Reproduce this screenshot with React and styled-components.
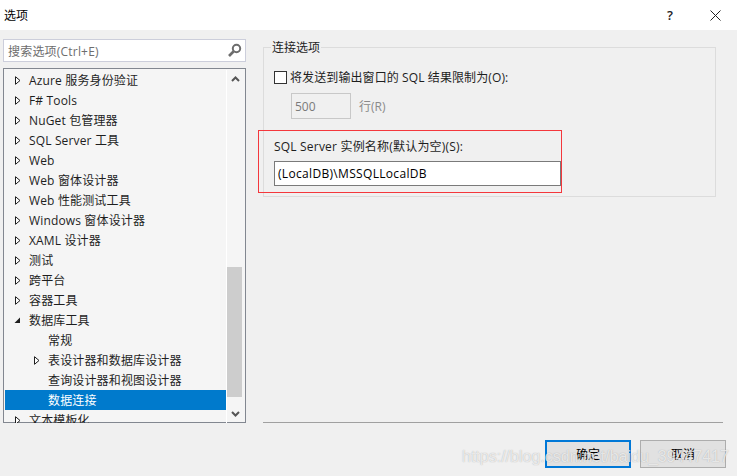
import styled, { createGlobalStyle } from "styled-components";

const GlobalStyle = createGlobalStyle`
  html, body {
    margin: 0;
    padding: 0;
    background: #f0f0f0;
  }
  * {
    box-sizing: border-box;
  }
`;

const FONT = `"Open Sans", "Noto Sans CJK SC", sans-serif`;

// Window

const Dialog = styled.div`
  position: relative;
  width: 737px;
  height: 476px;
  overflow: hidden;
  display: flex;
  flex-direction: column;
  background-color: #f0f0f0;
  color: #1e1e1e;
  font-family: ${FONT};
  font-size: 12px;
`;

const TitleBar = styled.div`
  height: 30px;
  flex: none;
  display: flex;
  align-items: center;
  padding-left: 4px;
  background-color: #fff;
  color: #000;
`;

const TitleText = styled.span`
  flex: 1;
`;

const TitleButton = styled.button`
  width: ${(p) => p.$width}px;
  height: 30px;
  padding: 0;
  display: flex;
  align-items: center;
  justify-content: center;
  border: 0;
  background: none;
  font-family: ${FONT};
  font-size: 13px;
  font-weight: 600;
  color: #222;
`;

const Body = styled.div`
  flex: 1;
  display: flex;
  min-height: 0;
`;

// Left side

const LeftColumn = styled.div`
  width: 246px;
  flex: none;
  padding: 9px 0 0 3px;
  display: flex;
  flex-direction: column;
  gap: 6px;
`;

const SearchBox = styled.div`
  height: 23px;
  display: flex;
  align-items: center;
  justify-content: space-between;
  padding: 0 3px 0 4px;
  background-color: #fff;
  border: 1px solid #cccedb;
  color: #6d6d6d;
  letter-spacing: 0.2px;
`;

const Tree = styled.div`
  height: 355px;
  display: flex;
  padding: 1px;
  background-color: #f5f5f5;
  border: 1px solid #828790;
`;

const TreeList = styled.div`
  flex: 1;
  height: 353px;
  overflow: hidden;
  border-right: 1px solid #fff;
`;

const TreeRow = styled.div`
  height: 20px;
  display: flex;
  align-items: center;
  padding-left: ${(p) => 5 + p.$level * 19}px;
  background-color: ${(p) => (p.$selected ? "#007acc" : "transparent")};
  color: ${(p) => (p.$selected ? "#fff" : "#1e1e1e")};
  white-space: nowrap;
  letter-spacing: 0.15px;
`;

const Arrow = styled.span`
  width: 19px;
  flex: none;
  display: flex;
  align-items: center;
  padding-left: 5px;
`;

const ScrollBar = styled.div`
  width: 17px;
  flex: none;
  display: flex;
  flex-direction: column;
  align-items: center;
  background-color: #f5f5f5;
`;

const ScrollButton = styled.div`
  height: 17px;
  flex: none;
  display: flex;
  align-items: center;
  justify-content: center;
  padding-top: ${(p) => (p.$down ? "3px" : "0")};
`;

const ScrollTrack = styled.div`
  flex: 1;
  display: flex;
  flex-direction: column;
  justify-content: flex-end;
  width: 100%;
`;

const ScrollThumb = styled.div`
  height: 130px;
  width: 15px;
  margin-bottom: 7px;
  background-color: #cdcdcd;
`;

// Right side

const RightColumn = styled.div`
  flex: 1;
  padding: 17px 21px 0 17px;
  display: flex;
  flex-direction: column;
`;

const GroupBox = styled.fieldset`
  position: relative;
  height: 150px;
  margin: 0;
  padding: 0 0 0 10px;
  border: 1px solid #dcdcdc;
  min-width: 0;
`;

const GroupLegend = styled.div`
  position: absolute;
  top: -9px;
  left: 7px;
  padding: 0 1px;
  line-height: 17px;
  background-color: #f0f0f0;
`;

const CheckRow = styled.label`
  display: flex;
  align-items: center;
  gap: 3px;
  height: 18px;
  margin-top: 20px;
  letter-spacing: 0.1px;
`;

const CheckBox = styled.span`
  width: 13px;
  height: 13px;
  flex: none;
  background-color: #fff;
  border: 1px solid #333;
`;

const LimitRow = styled.div`
  display: flex;
  align-items: center;
  gap: 8px;
  margin: 7px 0 0 17px;
  color: #8a8a8a;
`;

const LimitInput = styled.div`
  width: 60px;
  height: 26px;
  display: flex;
  align-items: center;
  padding-left: 3px;
  background-color: #f0f0f0;
  border: 1px solid #c8c8c8;
  color: #7a7a7a;
`;

const InstanceLabel = styled.div`
  height: 18px;
  margin-top: 19px;
  line-height: 18px;
  letter-spacing: 0.2px;
`;

const InstanceInput = styled.div`
  width: 287px;
  height: 25px;
  margin-top: 5px;
  display: flex;
  align-items: center;
  padding-left: 3px;
  background-color: #fff;
  border: 1px solid #7a7a7a;
  color: #000;
  letter-spacing: 0.32px;
`;

const Highlight = styled.div`
  position: absolute;
  left: -6px;
  top: 82px;
  width: 304px;
  height: 63px;
  border: 1px solid #f4373c;
  pointer-events: none;
`;

const FooterWrap = styled.div`
  margin-top: auto;
  margin-right: -7px;
  margin-bottom: 8px;
`;

const FooterRule = styled.div`
  height: 1px;
  background-color: #a0a0a0;
`;

const FooterButtons = styled.div`
  display: flex;
  justify-content: flex-end;
  gap: 9px;
  margin: 17px -3px 0 0;
`;

const Button = styled.button`
  width: 86px;
  height: 28px;
  padding: 0;
  font-family: ${FONT};
  font-size: 12px;
  color: #000;
  background-color: #e1e1e1;
  border: ${(p) => (p.$primary ? "2px solid #0078d7" : "1px solid #adadad")};
`;

const Watermark = styled.div`
  position: absolute;
  left: 462px;
  top: 446px;
  font-family: "Liberation Sans", Arial, sans-serif;
  font-size: 16px;
  line-height: 22px;
  white-space: nowrap;
  color: rgba(255, 255, 255, 0.72);
  text-shadow: 0 0 1px rgba(110, 110, 110, 0.55);
  pointer-events: none;
`;

const treeItems = [
  { label: "Azure 服务身份验证", level: 0, arrow: "closed" },
  { label: "F# Tools", level: 0, arrow: "closed" },
  { label: "NuGet 包管理器", level: 0, arrow: "closed" },
  { label: "SQL Server 工具", level: 0, arrow: "closed" },
  { label: "Web", level: 0, arrow: "closed" },
  { label: "Web 窗体设计器", level: 0, arrow: "closed" },
  { label: "Web 性能测试工具", level: 0, arrow: "closed" },
  { label: "Windows 窗体设计器", level: 0, arrow: "closed" },
  { label: "XAML 设计器", level: 0, arrow: "closed" },
  { label: "测试", level: 0, arrow: "closed" },
  { label: "跨平台", level: 0, arrow: "closed" },
  { label: "容器工具", level: 0, arrow: "closed" },
  { label: "数据库工具", level: 0, arrow: "open" },
  { label: "常规", level: 1, arrow: "none" },
  { label: "表设计器和数据库设计器", level: 1, arrow: "closed" },
  { label: "查询设计器和视图设计器", level: 1, arrow: "none" },
  { label: "数据连接", level: 1, arrow: "none", selected: true },
  { label: "文本模板化", level: 0, arrow: "closed" },
];

const TreeArrow = ({ type }) => {
  if (type === "closed") {
    return (
      <svg width="6" height="9" viewBox="0 0 6 9">
        <path d="M0.5 0.7 L5 4.5 L0.5 8.3 Z" fill="#fff" stroke="#1e1e1e" />
      </svg>
    );
  }
  if (type === "open") {
    return (
      <svg width="7" height="7" viewBox="0 0 7 7" style={{ marginLeft: -1 }}>
        <path d="M6 0.5 V6 H0.5 Z" fill="#1e1e1e" />
      </svg>
    );
  }
  return null;
};

const Chevron = ({ up }) => (
  <svg width="9" height="6" viewBox="0 0 9 6">
    <path
      d={up ? "M1 5 L4.5 1.5 L8 5" : "M1 1 L4.5 4.5 L8 1"}
      fill="none"
      stroke="#555"
      strokeWidth="2"
    />
  </svg>
);

const App = () => {
  return (
    <Dialog>
      <GlobalStyle />
      <TitleBar>
        <TitleText>选项</TitleText>
        <TitleButton $width={46}>?</TitleButton>
        <TitleButton $width={44}>
          <svg width="11" height="11" viewBox="0 0 11 11">
            <path d="M0.5 0.5 L10.5 10.5 M10.5 0.5 L0.5 10.5" stroke="#222" fill="none" />
          </svg>
        </TitleButton>
      </TitleBar>
      <Body>
        <LeftColumn>
          <SearchBox>
            搜索选项(Ctrl+E)
            <svg width="15" height="15" viewBox="0 0 15 15">
              <circle cx="9.5" cy="5.5" r="3.7" fill="none" stroke="#6d6d6d" strokeWidth="2" />
              <path d="M6.5 8.5 L2 13" stroke="#6d6d6d" strokeWidth="2.6" />
            </svg>
          </SearchBox>
          <Tree>
            <TreeList>
              {treeItems.map((item) => (
                <TreeRow key={item.label} $level={item.level} $selected={item.selected}>
                  <Arrow>
                    <TreeArrow type={item.arrow} />
                  </Arrow>
                  {item.label}
                </TreeRow>
              ))}
            </TreeList>
            <ScrollBar>
              <ScrollButton>
                <Chevron up />
              </ScrollButton>
              <ScrollTrack>
                <ScrollThumb />
              </ScrollTrack>
              <ScrollButton $down>
                <Chevron />
              </ScrollButton>
            </ScrollBar>
          </Tree>
        </LeftColumn>
        <RightColumn>
          <GroupBox>
            <GroupLegend>连接选项</GroupLegend>
            <CheckRow>
              <CheckBox />
              将发送到输出窗口的 SQL 结果限制为(O):
            </CheckRow>
            <LimitRow>
              <LimitInput>500</LimitInput>
              行(R)
            </LimitRow>
            <InstanceLabel>SQL Server 实例名称(默认为空)(S):</InstanceLabel>
            <InstanceInput>(LocalDB)\MSSQLLocalDB</InstanceInput>
            <Highlight />
          </GroupBox>
          <FooterWrap>
            <FooterRule />
            <FooterButtons>
              <Button $primary>确定</Button>
              <Button>取消</Button>
            </FooterButtons>
          </FooterWrap>
        </RightColumn>
      </Body>
      <Watermark>https://blog.csdn.net/baidu_39447417</Watermark>
    </Dialog>
  );
};

export default App;
